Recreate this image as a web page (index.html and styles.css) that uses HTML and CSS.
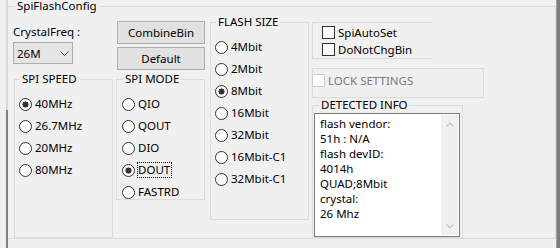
FILE: index.html
```html
<!DOCTYPE html>
<html lang="en">
<head>
    <title>SpiFlashConfig</title>

    <link rel="stylesheet" href="styles.css">
</head>
<body>
    <div class="edge-left"></div>

    <fieldset class="group main">
        <legend>SpiFlashConfig</legend>

        <div class="row">
            <div class="col col-crystal">
                <div class="field-label">CrystalFreq :</div>
                <div class="combo">
                    <span>26M</span>
                    <svg width="9" height="5" viewBox="0 0 9 5"><polyline points="0.5,0.5 4.5,4.5 8.5,0.5" fill="none" stroke="#444" stroke-width="1"/></svg>
                </div>

                <fieldset class="group spi-speed">
                    <legend>SPI SPEED</legend>
                    <div class="radio-list">
                        <div class="radio-row"><span class="radio checked"></span><span>40MHz</span></div>
                        <div class="radio-row"><span class="radio"></span><span>26.7MHz</span></div>
                        <div class="radio-row"><span class="radio"></span><span>20MHz</span></div>
                        <div class="radio-row"><span class="radio"></span><span>80MHz</span></div>
                    </div>
                </fieldset>
            </div>

            <div class="col col-buttons">
                <button class="btn">CombineBin</button>
                <button class="btn btn-default">Default</button>

                <fieldset class="group spi-mode">
                    <legend>SPI MODE</legend>
                    <div class="radio-list">
                        <div class="radio-row"><span class="radio"></span><span>QIO</span></div>
                        <div class="radio-row"><span class="radio"></span><span>QOUT</span></div>
                        <div class="radio-row"><span class="radio"></span><span>DIO</span></div>
                        <div class="radio-row"><span class="radio checked"></span><span class="focused">DOUT</span></div>
                        <div class="radio-row"><span class="radio"></span><span>FASTRD</span></div>
                    </div>
                </fieldset>
            </div>

            <fieldset class="group flash-size">
                <legend>FLASH SIZE</legend>
                <div class="radio-list">
                    <div class="radio-row"><span class="radio"></span><span>4Mbit</span></div>
                    <div class="radio-row"><span class="radio"></span><span>2Mbit</span></div>
                    <div class="radio-row"><span class="radio checked"></span><span>8Mbit</span></div>
                    <div class="radio-row"><span class="radio"></span><span>16Mbit</span></div>
                    <div class="radio-row"><span class="radio"></span><span>32Mbit</span></div>
                    <div class="radio-row"><span class="radio"></span><span>16Mbit-C1</span></div>
                    <div class="radio-row"><span class="radio"></span><span>32Mbit-C1</span></div>
                </div>
            </fieldset>

            <div class="col col-info">
                <div class="checks">
                    <div class="check-row"><span class="check"></span><span>SpiAutoSet</span></div>
                    <div class="check-row"><span class="check"></span><span>DoNotChgBin</span></div>
                </div>

                <div class="lock">
                    <span class="check disabled"></span><span class="lock-text">LOCK SETTINGS</span>
                </div>

                <fieldset class="group detected">
                    <legend>DETECTED INFO</legend>
                    <div class="textbox">
                        <div class="textbox-text">
                            flash vendor:<br>
                            51h : N/A<br>
                            flash devID:<br>
                            4014h<br>
                            QUAD;8Mbit<br>
                            crystal:<br>
                            26 Mhz
                        </div>
                        <div class="scrollbar">
                            <svg width="8" height="5" viewBox="0 0 8 5"><polyline points="0.5,4.5 4,1 7.5,4.5" fill="none" stroke="#c2c2c2" stroke-width="1.2"/></svg>
                            <svg width="8" height="5" viewBox="0 0 8 5"><polyline points="0.5,0.5 4,4 7.5,0.5" fill="none" stroke="#c2c2c2" stroke-width="1.2"/></svg>
                        </div>
                    </div>
                </fieldset>
            </div>
        </div>
    </fieldset>

    <div class="edge-right"></div>
</body>
</html>
```

FILE: styles.css
```css
body {
    display: flex;
    align-items: flex-start;

    width: 560px;
    height: 248px;
    margin: 0;
    overflow: hidden;

    background-color: #f0f0f0;
    color: #000;
    font-family: "Noto Sans", "Segoe UI", sans-serif;
    font-size: 11.5px;
}

.edge-left {
    flex: none;
    align-self: stretch;
    width: 2px;
    margin-left: 6px;
    background: linear-gradient(#d9d9d9 110px, #7f7f7f 110px);
}

.edge-right {
    flex: none;
    align-self: stretch;
    width: 3px;
    border-left: 1px solid #a3a3a3;
    background-color: #7d7d7d;
}

/* group boxes */
.group {
    margin: 0;
    min-width: 0;
    box-sizing: border-box;
    border: 1px solid #dcdcdc;
}

.group legend {
    padding: 0 2px;
    margin-left: 1px;
    line-height: 14px;
}

.main {
    flex: none;
    width: 548px;
    padding: 0 0 0 5px;
    border-left: none;
}

.main > legend {
    margin-left: 2px;
    line-height: 12px;
}

.row {
    display: flex;
    align-items: stretch;
}

.col {
    display: flex;
    flex-direction: column;
}

/* crystal column */
.col-crystal {
    width: 100px;
}

.field-label {
    margin-top: 12px;
    line-height: 16px;
}

.combo {
    display: flex;
    justify-content: space-between;
    align-items: center;

    width: 60px;
    height: 22px;
    margin-top: 2px;
    padding: 0 3px 0 3px;
    box-sizing: border-box;

    background-color: #e5e5e5;
    border: 1px solid #adadad;
}

.spi-speed {
    flex: 1;
    margin-top: 8px;
    margin-left: 1px;
    padding: 7px 0 0 4px;
}

/* buttons column */
.col-buttons {
    width: 89px;
    margin-left: 3px;
}

.btn {
    width: 88px;
    height: 23px;
    margin: 9px 0 0 1px;
    padding: 0;

    background-color: #e1e1e1;
    border: 1px solid #adadad;
    color: #000;
    font: inherit;
}

.btn-default {
    margin-top: 3px;
}

.spi-mode {
    margin-top: 2px;
    padding: 7px 0 0 5px;
}

.spi-mode .radio-list {
    height: 106px;
}

/* flash size */
.flash-size {
    align-self: flex-start;
    width: 99px;
    margin-top: 3px;
    margin-left: 5px;
    padding: 7px 0 29px 4px;
}

/* radios */
.radio-row {
    display: flex;
    align-items: center;
    gap: 3px;
    height: 22px;
    line-height: 16px;
    white-space: nowrap;
}

.radio {
    flex: none;
    width: 13px;
    height: 13px;
    box-sizing: border-box;
    border: 1px solid #333;
    border-radius: 50%;
    background-color: #fff;
}

.radio.checked {
    background: radial-gradient(circle, #333 0 2.8px, #fff 3.3px);
}

.focused {
    line-height: 14px;
    padding-right: 1px;
    outline: 1px dotted #000;
}

/* info column */
.col-info {
    width: 172px;
    margin-left: 3px;
}

.checks {
    width: 120px;
    margin-top: 10px;
    padding: 1px 0 0 9px;
    box-sizing: border-box;
    border: 1px solid #dcdcdc;
    border-right: none;
}

.check-row {
    display: flex;
    align-items: center;
    gap: 3px;
    height: 17px;
    line-height: 16px;
}

.check {
    flex: none;
    width: 13px;
    height: 13px;
    box-sizing: border-box;
    border: 1px solid #333;
    background-color: #fff;
}

.check.disabled {
    border-color: #cccccc;
}

.lock {
    display: flex;
    align-items: flex-start;
    gap: 3px;

    height: 30px;
    margin-top: 9px;
    padding-top: 5px;
    box-sizing: border-box;
    border: 1px solid #dcdcdc;
}

.lock .check {
    margin-left: -1px;
}

.lock-text {
    line-height: 13px;
    color: #7a7a7a;
}

.detected {
    width: 151px;
    padding: 1px 2px 0 1px;
}

.detected legend {
    margin-left: 5px;
}

.textbox {
    display: flex;
    height: 124px;
    box-sizing: border-box;
    border: 1px solid #7a7a7a;
    background-color: #fff;
}

.textbox-text {
    flex: 1;
    padding: 2px 0 0 5px;
    line-height: 15px;
}

.scrollbar {
    display: flex;
    flex-direction: column;
    justify-content: space-between;
    align-items: center;

    width: 17px;
    margin: 1px 1px 1px 0;
    padding: 7px 0 6px;
    box-sizing: border-box;
    background-color: #f0f0f0;
}
```
